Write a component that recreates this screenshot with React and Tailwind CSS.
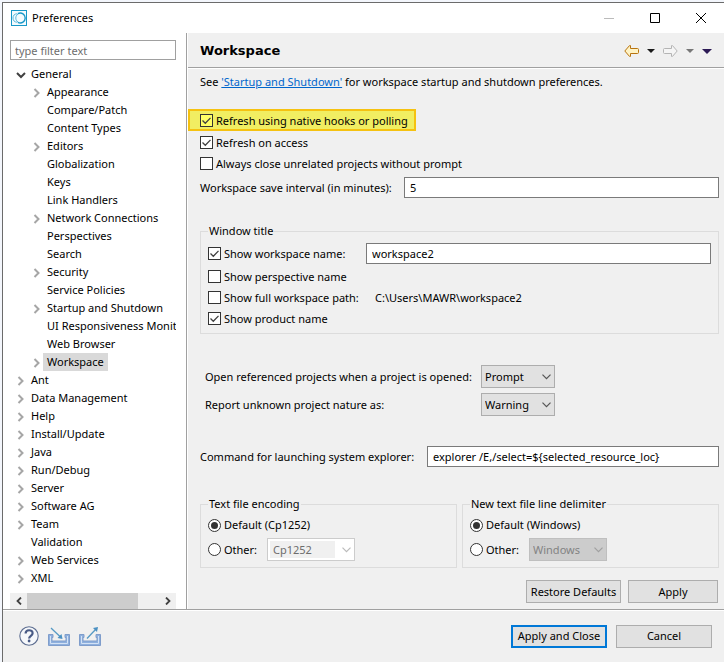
import React, { useState } from "react";

const tree = [
  { name: "General", level: 0, open: true },
  { name: "Appearance", level: 1, more: true },
  { name: "Compare/Patch", level: 1 },
  { name: "Content Types", level: 1 },
  { name: "Editors", level: 1, more: true },
  { name: "Globalization", level: 1 },
  { name: "Keys", level: 1 },
  { name: "Link Handlers", level: 1 },
  { name: "Network Connections", level: 1, more: true },
  { name: "Perspectives", level: 1 },
  { name: "Search", level: 1 },
  { name: "Security", level: 1, more: true },
  { name: "Service Policies", level: 1 },
  { name: "Startup and Shutdown", level: 1, more: true },
  { name: "UI Responsiveness Monitoring", level: 1 },
  { name: "Web Browser", level: 1 },
  { name: "Workspace", level: 1, more: true },
  { name: "Ant", level: 0, more: true },
  { name: "Data Management", level: 0, more: true },
  { name: "Help", level: 0, more: true },
  { name: "Install/Update", level: 0, more: true },
  { name: "Java", level: 0, more: true },
  { name: "Run/Debug", level: 0, more: true },
  { name: "Server", level: 0, more: true },
  { name: "Software AG", level: 0, more: true },
  { name: "Team", level: 0, more: true },
  { name: "Validation", level: 0 },
  { name: "Web Services", level: 0, more: true },
  { name: "XML", level: 0, more: true },
];

function TreeItem({ item, selected, onSelect }) {
  return (
    <li className={`flex h-[18px] items-center ${item.level ? "pl-5" : "pl-1"}`}>
      <span className="flex w-[13px] shrink-0 justify-center pt-0.5">
        {item.open && (
          <svg width="10" height="7" viewBox="0 0 10 7" fill="none" stroke="#404040" strokeWidth="2">
            <path d="M1 1l4 4 4-4" />
          </svg>
        )}
        {item.more && (
          <svg width="7" height="10" viewBox="0 0 7 10" fill="none" stroke="#a6a6a6" strokeWidth="2">
            <path d="M1.5 1l4 4-4 4" />
          </svg>
        )}
      </span>
      <button
        type="button"
        onClick={() => onSelect(item.name)}
        className={`h-[18px] px-1 leading-[18px] whitespace-nowrap ${selected ? "bg-[#d9d9d9]" : ""}`}
      >
        {item.name}
      </button>
    </li>
  );
}

function Checkbox({ label, defaultChecked, yellow }) {
  return (
    <label className="flex items-center gap-[3px] whitespace-nowrap">
      <span className="grid shrink-0">
        <input
          type="checkbox"
          defaultChecked={defaultChecked}
          className={`peer col-start-1 row-start-1 size-[13px] appearance-none border border-[#333] ${yellow ? "bg-[#ffff66]" : "bg-white"}`}
        />
        <svg
          className="pointer-events-none invisible col-start-1 row-start-1 peer-checked:visible"
          width="13"
          height="13"
          viewBox="0 0 13 13"
          fill="none"
          stroke="#404040"
          strokeWidth="1.3"
        >
          <path d="M2.5 6.5l2.8 2.8 5.2-5.4" />
        </svg>
      </span>
      {label}
    </label>
  );
}

function Radio({ name, label, defaultChecked }) {
  return (
    <label className="flex items-center gap-[3px] whitespace-nowrap">
      <span className="grid shrink-0 place-items-center">
        <input
          type="radio"
          name={name}
          defaultChecked={defaultChecked}
          className="peer col-start-1 row-start-1 size-[13px] appearance-none rounded-full border border-[#333] bg-white"
        />
        <span className="pointer-events-none invisible col-start-1 row-start-1 size-[7px] rounded-full bg-[#333] peer-checked:visible" />
      </span>
      {label}
    </label>
  );
}

function Select({ id, label, options, className, disabled, chevron = "#555" }) {
  return (
    <span className="grid items-center">
      <select
        id={id}
        aria-label={label}
        disabled={disabled}
        className={`col-start-1 row-start-1 h-[23px] appearance-none border opacity-100 ${className}`}
      >
        {options.map((o) => (
          <option key={o}>{o}</option>
        ))}
      </select>
      <svg
        className="pointer-events-none col-start-1 row-start-1 mr-1 justify-self-end"
        width="9"
        height="6"
        viewBox="0 0 9 6"
        fill="none"
        stroke={chevron}
        strokeWidth="1.2"
      >
        <path d="M0.5 0.7l4 4 4-4" />
      </svg>
    </span>
  );
}

function Group({ title, className, children }) {
  return (
    <fieldset className={`min-w-0 border border-[#dcdcdc] pl-[7px] ${className}`}>
      <legend className="h-[18px] px-px leading-[18px]">{title}</legend>
      {children}
    </fieldset>
  );
}

function Triangle({ color }) {
  return (
    <svg width="8" height="4" viewBox="0 0 8 4">
      <path d="M0 0h8l-4 4z" fill={color} />
    </svg>
  );
}

function Tray() {
  return (
    <>
      <path d="M0.5 8.5h4.5v3h-1v3.5h14v-3.5h-1v-3h4.5v11h-21z" fill="#8fb0de" stroke="#7f9dcb" />
      <path d="M2.5 10v7.5h17V10" stroke="#d3e2f5" />
    </>
  );
}

function TitleBar() {
  return (
    <header className="flex h-[30px] shrink-0 items-center bg-white pl-2">
      <svg width="16" height="16" viewBox="0 0 16 16" fill="none">
        <rect x="0.5" y="0.5" width="15" height="15" fill="#f4fbfe" stroke="#1898c8" />
        <path d="M6 3.8C3.4 3.8 2 5.6 2 8s1.4 4.2 4 4.2" stroke="#5cb8dc" />
        <path d="M7 4.2C5.4 5 4.8 6.4 4.8 8S5.4 11 7 11.8" stroke="#5cb8dc" />
        <path d="M6.8 3.6c4-1.8 7.4 1 7.4 4.4s-3.4 6.2-7.4 4.4" stroke="#1898c8" strokeWidth="1.4" />
      </svg>
      <h1 className="ml-[5px] flex-1">Preferences</h1>
      <button type="button" aria-label="Minimize" className="flex w-[46px] justify-center">
        <svg width="10" height="10" viewBox="0 0 10 10" stroke="#bbb">
          <path d="M0 5.5h10" />
        </svg>
      </button>
      <button type="button" aria-label="Maximize" className="flex w-[46px] justify-center">
        <svg width="10" height="10" viewBox="0 0 10 10" fill="none" stroke="#000">
          <path d="M0.5 0.5h9v9h-9z" />
        </svg>
      </button>
      <button type="button" aria-label="Close" className="flex w-[46px] justify-center">
        <svg width="10" height="10" viewBox="0 0 10 10" fill="none" stroke="#000">
          <path d="M0 0l10 10M10 0L0 10" />
        </svg>
      </button>
    </header>
  );
}

function Sidebar() {
  const [selected, setSelected] = useState("Workspace");

  return (
    <nav className="flex w-[184px] shrink-0 flex-col border-r border-[#a0a0a0] bg-white pt-[7px] pr-[10px] pl-[7px]">
      <input
        type="text"
        aria-label="Filter"
        placeholder="type filter text"
        className="h-5 w-full shrink-0 border border-[#a0a0a0] px-1 placeholder:text-[#6d6d6d]"
      />
      <ul className="mt-[5px] overflow-hidden">
        {tree.map((item) => (
          <TreeItem key={item.name} item={item} selected={selected === item.name} onSelect={setSelected} />
        ))}
      </ul>
      <div className="mt-auto flex h-4 shrink-0 items-center bg-[#f0f0f0]">
        <span className="flex w-[17px] justify-center">
          <svg width="6" height="8" viewBox="0 0 6 8" fill="none" stroke="#404040" strokeWidth="1.8">
            <path d="M5 0.5L1.5 4 5 7.5" />
          </svg>
        </span>
        <span className="h-full w-[111px] bg-[#cdcdcd]" />
        <span className="ml-auto flex w-[17px] justify-center">
          <svg width="6" height="8" viewBox="0 0 6 8" fill="none" stroke="#404040" strokeWidth="1.8">
            <path d="M1 0.5L4.5 4 1 7.5" />
          </svg>
        </span>
      </div>
    </nav>
  );
}

const field = "h-[21px] min-w-0 flex-1 border border-[#7a7a7a] bg-white px-[5px]";
const button = "h-[23px] border border-[#adadad] bg-[#e1e1e1]";

function WorkspacePage() {
  return (
    <main className="flex min-w-0 flex-1 flex-col border-l border-white bg-[#f0f0f0]">
      <div className="flex h-[35px] shrink-0 items-center border-b border-[#a0a0a0] px-3 pt-0.5 shadow-[0_1px_0_#fff]">
        <h2 className="flex-1 font-['DejaVu_Sans',sans-serif] text-[13px] font-bold">Workspace</h2>
        <button type="button" aria-label="Back">
          <svg width="15" height="12" viewBox="0 0 15 12" fill="#fff3c4" stroke="#b8740f">
            <path d="M0.8 6L5.5 0.6h1v2.9h7q1 0 1 1v3q0 1-1 1h-7v2.9h-1z" />
          </svg>
        </button>
        <button type="button" aria-label="Back history" className="ml-2">
          <Triangle color="#1a1a1a" />
        </button>
        <button type="button" aria-label="Forward" className="ml-2">
          <svg width="15" height="12" viewBox="0 0 15 12" fill="#f5f5f5" stroke="#b4b4b4">
            <path d="M14.2 6L9.5 0.6h-1v2.9h-7q-1 0-1 1v3q0 1 1 1h7v2.9h1z" />
          </svg>
        </button>
        <button type="button" aria-label="Forward history" className="ml-2">
          <Triangle color="#777" />
        </button>
        <button type="button" aria-label="View menu" className="ml-2">
          <svg width="10" height="5" viewBox="0 0 10 5">
            <path d="M0 0h10L5 5z" fill="#2c1a55" />
          </svg>
        </button>
      </div>

      <div className="flex flex-1 flex-col pt-[5px] pr-[5px] pb-1.5 pl-3">
        <p className="leading-[18px]">
          See{" "}
          <a href="#startup" className="text-[#0066cc] underline">
            'Startup and Shutdown'
          </a>{" "}
          for workspace startup and shutdown preferences.
        </p>

        <div className="mt-[18px] -ml-3 flex h-[22px] items-center self-start border-2 border-[#f5c211] bg-[#f1ee62] pt-px pr-1.5 pl-[10px]">
          <Checkbox label="Refresh using native hooks or polling" defaultChecked yellow />
        </div>
        <div className="mt-px flex h-[21px] items-center">
          <Checkbox label="Refresh on access" defaultChecked />
        </div>
        <div className="flex h-[21px] items-center">
          <Checkbox label="Always close unrelated projects without prompt" />
        </div>
        <div className="mt-[3px] flex items-center">
          <label htmlFor="interval" className="w-[204px] whitespace-nowrap">
            Workspace save interval (in minutes):
          </label>
          <input id="interval" type="text" defaultValue="5" className={field} />
        </div>

        <Group title="Window title" className="mt-6 pr-[7px] pb-1">
          <div className="mt-[3px] mb-0.5 flex items-center">
            <span className="w-[158px]">
              <Checkbox label="Show workspace name:" defaultChecked />
            </span>
            <input type="text" aria-label="Workspace name" defaultValue="workspace2" className={field} />
          </div>
          <div className="flex h-[21px] items-center">
            <Checkbox label="Show perspective name" />
          </div>
          <div className="flex h-[21px] items-center">
            <span className="w-[167px]">
              <Checkbox label="Show full workspace path:" />
            </span>
            <span>C:\Users\MAWR\workspace2</span>
          </div>
          <div className="flex h-[21px] items-center">
            <Checkbox label="Show product name" defaultChecked />
          </div>
        </Group>

        <div className="mt-[31px] grid grid-cols-[276px_auto] items-center justify-start gap-y-[5px] pl-[5px] whitespace-nowrap">
          <label htmlFor="open-referenced">Open referenced projects when a project is opened:</label>
          <Select
            id="open-referenced"
            options={["Prompt", "Always", "Never"]}
            className="w-[74px] border-[#adadad] bg-[#e1e1e1] pl-[3px]"
          />
          <label htmlFor="unknown-nature">Report unknown project nature as:</label>
          <Select
            id="unknown-nature"
            options={["Warning", "Error", "Ignore"]}
            className="w-[74px] border-[#adadad] bg-[#e1e1e1] pl-[3px]"
          />
        </div>

        <div className="mt-[30px] flex items-center">
          <label htmlFor="explorer" className="w-[227px] whitespace-nowrap">
            Command for launching system explorer:
          </label>
          <input
            id="explorer"
            type="text"
            defaultValue="explorer /E,/select=${selected_resource_loc}"
            className={field}
          />
        </div>

        <div className="mt-7 grid grid-cols-2 gap-[5px]">
          <Group title="Text file encoding" className="pb-1.5">
            <div className="mt-px mb-0.5 flex h-[22px] items-center">
              <Radio name="encoding" label="Default (Cp1252)" defaultChecked />
            </div>
            <div className="flex items-center">
              <span className="w-[59px]">
                <Radio name="encoding" label="Other:" />
              </span>
              <Select
                label="Encoding"
                options={["Cp1252", "UTF-8"]}
                disabled
                chevron="#bbb"
                className="w-[88px] border-[#ccc] bg-[#f0f0f0] pl-[5px] text-[#6d6d6d] shadow-[inset_0_0_0_2px_#fff,inset_-19px_0_0_#fff]"
              />
            </div>
          </Group>
          <Group title="New text file line delimiter" className="pb-1.5">
            <div className="mt-px mb-0.5 flex h-[22px] items-center">
              <Radio name="delimiter" label="Default (Windows)" defaultChecked />
            </div>
            <div className="flex items-center">
              <span className="w-[59px]">
                <Radio name="delimiter" label="Other:" />
              </span>
              <Select
                label="Line delimiter"
                options={["Windows", "Unix"]}
                disabled
                chevron="#a0a0a0"
                className="w-[78px] border-[#bfbfbf] bg-[#ccc] pl-[3px] text-[#838383]"
              />
            </div>
          </Group>
        </div>

        <div className="mt-3 flex justify-end gap-[7px] pr-px">
          <button type="button" className={`w-[95px] ${button}`}>
            Restore Defaults
          </button>
          <button type="button" className={`w-[90px] ${button}`}>
            Apply
          </button>
        </div>
      </div>
    </main>
  );
}

function Footer() {
  return (
    <footer className="flex h-[53px] shrink-0 items-center gap-[9px] border-t border-[#a0a0a0] bg-[#f0f0f0] pr-3 pl-4 shadow-[inset_0_1px_0_#fff]">
      <button type="button" aria-label="Help">
        <svg width="20" height="20" viewBox="0 0 20 20" fill="none">
          <circle cx="10" cy="10" r="9.2" fill="#f6f8fb" stroke="#5f6f92" strokeWidth="1.1" />
          <path
            d="M6.6 7.6c0-4.4 7-4.4 7-0.4 0 2.6-3.5 2.6-3.5 5.3"
            stroke="#495b86"
            strokeWidth="2.2"
          />
          <circle cx="10.1" cy="15" r="1.4" fill="#495b86" />
        </svg>
      </button>
      <button type="button" aria-label="Import">
        <svg width="22" height="20" viewBox="0 0 22 20" fill="none">
          <Tray />
          <path d="M3 2l9.5 9" stroke="#5599c4" strokeWidth="1.3" />
          <path d="M14.5 13l-5-1 4-4z" fill="#4a90c2" />
        </svg>
      </button>
      <button type="button" aria-label="Export">
        <svg width="22" height="20" viewBox="0 0 22 20" fill="none">
          <Tray />
          <path d="M8 12.5L17 3" stroke="#5599c4" strokeWidth="1.3" />
          <path d="M19 1l-1 5-4-4z" fill="#4a90c2" />
        </svg>
      </button>
      <button type="button" className="ml-auto h-[23px] w-24 border-2 border-[#0078d7] bg-[#e1e1e1]">
        Apply and Close
      </button>
      <button type="button" className={`w-24 ${button}`}>
        Cancel
      </button>
    </footer>
  );
}

function App() {
  return (
    <div className="flex min-h-screen flex-col bg-[#f3f6fc] pt-0.5 pl-0.5 font-['Noto_Sans',sans-serif] text-[11px] leading-4 text-black">
      <div className="flex flex-1 flex-col border-t border-l border-[#6b6b6b]">
        <TitleBar />
        <div className="flex flex-1">
          <Sidebar />
          <WorkspacePage />
        </div>
        <Footer />
      </div>
    </div>
  );
}

export default App;
